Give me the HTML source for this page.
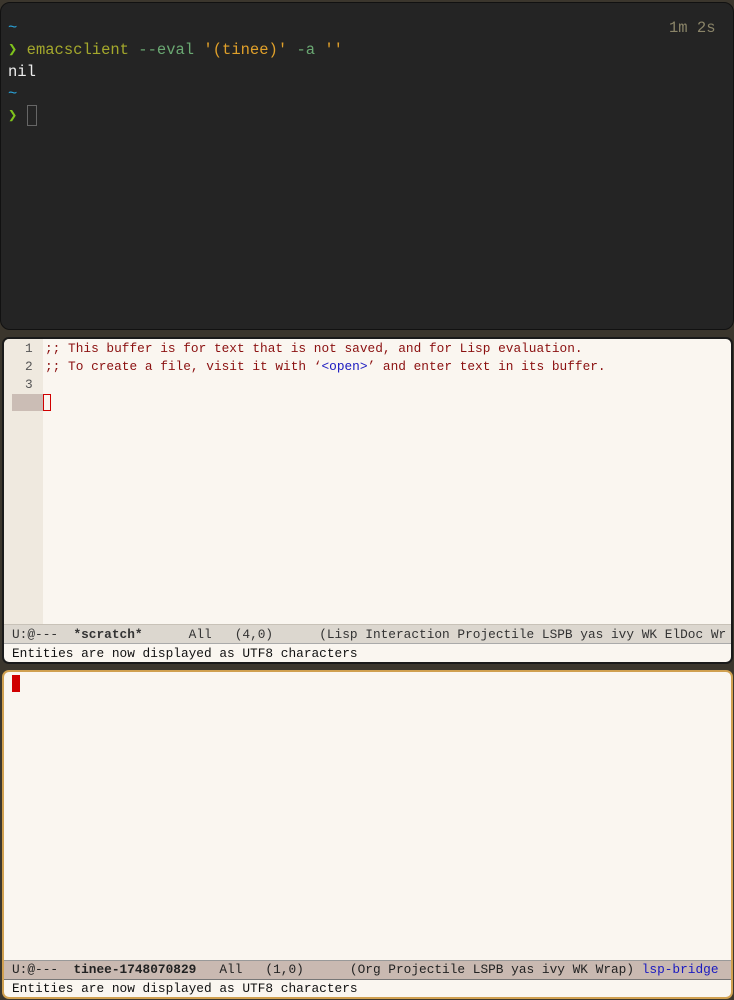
<!DOCTYPE html>
<html><head><meta charset="utf-8"><style>
*{margin:0;padding:0;box-sizing:border-box}
body{width:734px;height:1000px;background:#3b362d;position:relative;overflow:hidden;font-family:"Liberation Mono",monospace}
.term{position:absolute;left:0;top:2px;width:734px;height:328px;background:#242424;border-radius:10px;border:1px solid #111}
.t{position:absolute;font-size:15.5px;white-space:pre;line-height:20px}
.win{position:absolute;left:2px;width:731px;background:#faf6f0;border-radius:7px;overflow:hidden}
.e{position:absolute;font-size:12.8px;white-space:pre;line-height:18px}
</style></head><body>
<div class="term">
<div class="t" style="left:7px;top:15px;color:#2aa7e0">~</div>
<div class="t" style="left:668px;top:15px;color:#8a8468">1m 2s</div>
<div class="t" style="left:7px;top:37px"><span style="color:#7fc31c">❯</span> <span style="color:#a4a82c">emacsclient</span> <span style="color:#6aa872">--eval</span> <span style="color:#e0a02a">'(tinee)'</span> <span style="color:#6aa872">-a</span> <span style="color:#e0a02a">''</span></div>
<div class="t" style="left:7px;top:59px;color:#eee">nil</div>
<div class="t" style="left:7px;top:81px;color:#2aa7e0">~</div>
<div class="t" style="left:7px;top:103px;color:#7fc31c">❯</div>
<div style="position:absolute;left:26px;top:102px;width:10px;height:21px;border:1px solid #666"></div>
</div>

<div class="win" style="top:337px;height:327px;border:2px solid #1a1a1a">
<div style="position:absolute;left:0;top:0;width:39px;height:285px;background:#efe9df"></div>
<div class="e" style="left:21px;top:1px;color:#555">1<br>2<br>3</div>
<div style="position:absolute;left:8px;top:55px;width:31px;height:17px;background:#cbbdb5"></div>
<div style="position:absolute;left:39px;top:55px;width:8px;height:17px;border:1px solid #d00000"></div>
<div class="e" style="left:41px;top:1px;color:#8b1010">;; This buffer is for text that is not saved, and for Lisp evaluation.
;; To create a file, visit it with ‘<span style="color:#1a1ac0">&lt;open&gt;</span>’ and enter text in its buffer.</div>
<div style="position:absolute;left:0;top:285px;width:100%;height:20px;background:#dcd7cf;border-top:1px solid #c8c2b8;border-bottom:1px solid #aaa"></div>
<div class="e" style="left:8px;top:287px;color:#333">U:@---  <b>*scratch*</b>      All   (4,0)      (Lisp Interaction Projectile LSPB yas ivy WK ElDoc Wr</div>
<div class="e" style="left:8px;top:306px;color:#111">Entities are now displayed as UTF8 characters</div>
</div>

<div class="win" style="top:670px;height:329px;border:2px solid #d0a050">
<div style="position:absolute;left:8px;top:3px;width:8px;height:17px;background:#d00000"></div>
<div style="position:absolute;left:0;top:288px;width:100%;height:20px;background:#c9b9b1;border-top:1px solid #999;border-bottom:1px solid #777"></div>
<div class="e" style="left:8px;top:289px;color:#222">U:@---  <b>tinee-1748070829</b>   All   (1,0)      (Org Projectile LSPB yas ivy WK Wrap) <span style="color:#1a1ac0">lsp-bridge</span></div>
<div class="e" style="left:8px;top:308px;color:#111">Entities are now displayed as UTF8 characters</div>
</div>
</body></html>
